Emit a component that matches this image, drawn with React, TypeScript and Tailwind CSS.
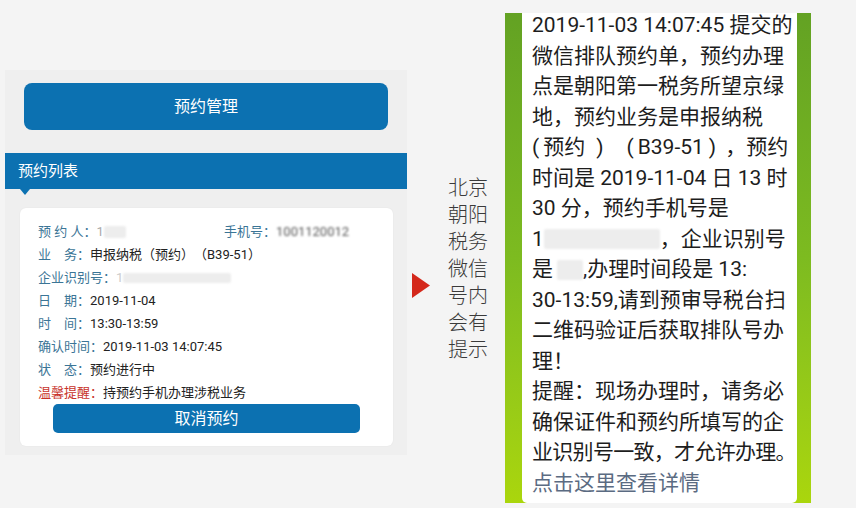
import React from 'react';

const blue = 'bg-[#0c71b1]';

const Row: React.FC<{ label: string; red?: boolean; children?: React.ReactNode }> = ({ label, red, children }) => (
  <div className="h-[23px] flex items-center pl-[18px] text-[13px] whitespace-nowrap [text-spacing-trim:space-all]">
    <span className={red ? 'text-[#c8332b]' : 'text-[#3b7596]'}>{label}</span>
    <span className="text-[#222]">{children}</span>
  </div>
);

const Blur: React.FC<{ w: number; h?: number }> = ({ w, h = 12 }) => (
  <span
    className="inline-block align-middle bg-[#ededed] rounded-[2px] blur-[1px]"
    style={{ width: w, height: h }}
  />
);

const message = [
  '2019-11-03 14:07:45 提交的',
  '微信排队预约单，预约办理',
  '点是朝阳第一税务所望京绿',
  '地，预约业务是申报纳税',
];

const message2 = ['时间是 2019-11-04 日 13 时', '30 分，预约手机号是'];

const message3 = [
  '30-13:59,请到预审导税台扫',
  '二维码验证后获取排队号办',
  '理！',
  '提醒：现场办理时，请务必',
  '确保证件和预约所填写的企',
];

const App: React.FC = () => {
  return (
    <div
      className="w-[856px] h-[508px] bg-[#f4f4f4] flex items-start overflow-hidden"
      style={{ fontFamily: '"Roboto", "Noto Sans CJK SC", sans-serif' }}
    >
      {/* left: app screenshot */}
      <div className="ml-[5px] mt-[70px] w-[402px] h-[385px] bg-[#efefef] flex flex-col">
        <div className={`mt-[13px] mx-[19px] h-[47px] rounded-[8px] ${blue} text-white text-[16px] flex items-center justify-center`}>
          预约管理
        </div>
        <div className={`relative mt-[23px] h-[36px] ${blue} text-white text-[15px] flex items-center pl-[13px]`}>
          预约列表
          <div className="absolute left-[15px] top-full w-0 h-0 border-x-[5px] border-x-transparent border-t-[6px] border-t-[#0c71b1]" />
        </div>
        <div className="mt-[19px] ml-[15px] mr-[14px] bg-white rounded-[6px] pt-[12px] pb-[13px] shadow-[0_0_2px_rgba(0,0,0,0.06)]">
          <div className="h-[23px] flex items-center text-[13px] whitespace-nowrap">
            <div className="w-[204px] pl-[18px] flex items-center">
              <span className="text-[#3b7596]">预 约 人：</span>
              <span className="text-[#aaa]">1</span>
              <Blur w={22} />
            </div>
            <span className="text-[#3b7596]">手机号：</span>
            <span className="text-[#555] blur-[1px]">1001120012</span>
          </div>
          <Row label="业　务：">申报纳税（预约）（B39-51）</Row>
          <Row label="企业识别号：">
            <span className="text-[#ccc]">1</span>
            <Blur w={108} h={10} />
          </Row>
          <Row label="日　期：">2019-11-04</Row>
          <Row label="时　间：">13:30-13:59</Row>
          <Row label="确认时间：">2019-11-03 14:07:45</Row>
          <Row label="状　态：">预约进行中</Row>
          <Row label="温馨提醒：" red>持预约手机办理涉税业务</Row>
          <div className={`mx-[33px] h-[29px] rounded-[5px] ${blue} text-white text-[16px] flex items-center justify-center`}>
            取消预约
          </div>
        </div>
      </div>

      {/* arrow */}
      <svg className="ml-[5px] mt-[273px]" width="18" height="25" viewBox="0 0 18 25">
        <polygon points="0,0 18,12.5 0,25" fill="#d4281b" />
      </svg>

      {/* vertical caption */}
      <div className="ml-[18px] mt-[175px] w-[40px] text-[20px] leading-[27px] text-[#3a3a3a] font-light">
        {['北京', '朝阳', '税务', '微信', '号内', '会有', '提示'].map((t) => (
          <div key={t}>{t}</div>
        ))}
      </div>

      {/* right: wechat message */}
      <div className="ml-[17px] mt-[13px] w-[306px] h-[490px] bg-gradient-to-b from-[#63a223] via-[#7dbb20] to-[#aad60c] pl-[17px] pr-[14px] flex">
        <div className="flex-1 bg-white rounded-b-[5px] pl-[10px] text-[21px] leading-[30.5px] text-[#1d1d1d] whitespace-nowrap overflow-hidden">
          <div className="-mt-[3px]">
            {message.map((l) => (
              <div key={l}>{l}</div>
            ))}
            <div className="flex">
              <span>(</span>
              <span className="ml-[4px]">预约</span>
              <span className="ml-[11px]">)</span>
              <span className="ml-[23px]">(</span>
              <span className="ml-[4px]">B39-51</span>
              <span className="ml-[5px]">)</span>
              <span className="ml-[9px]">，预约</span>
            </div>
            {message2.map((l) => (
              <div key={l}>{l}</div>
            ))}
            <div className="flex items-center">
              <span>1</span>
              <Blur w={116} h={20} />
              <span>，企业识别号</span>
            </div>
            <div className="flex items-center">
              <span>是</span>
              <span className="ml-[4px]"><Blur w={26} h={20} /></span>
              <span>,办理时间段是 13:</span>
            </div>
            {message3.map((l) => (
              <div key={l}>{l}</div>
            ))}
            <div className="tracking-[-0.7px]">业识别号一致，才允许办理。</div>
            <div className="text-[#5b6b82]">点击这里查看详情</div>
          </div>
        </div>
      </div>
    </div>
  );
};

export default App;
